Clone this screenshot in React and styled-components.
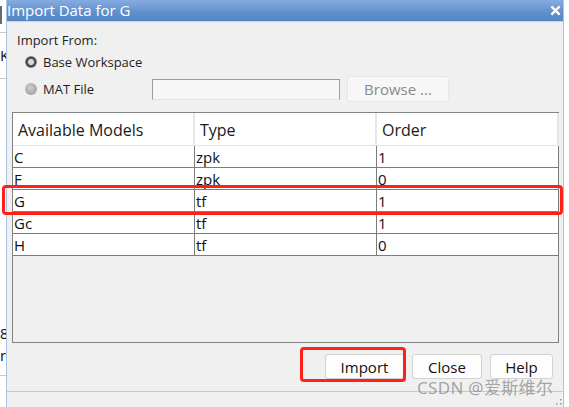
import React from "react";
import styled, { createGlobalStyle } from "styled-components";

const GlobalStyle = createGlobalStyle`
  html, body {
    margin: 0;
    padding: 0;
    background: #ffffff;
    overflow: hidden;
  }
  body {
    font-family: "Open Sans", "Noto Sans", sans-serif;
    color: #1a1a1a;
  }
`;

const models = [
  { name: "C", type: "zpk", order: "1" },
  { name: "F", type: "zpk", order: "0" },
  { name: "G", type: "tf", order: "1" },
  { name: "Gc", type: "tf", order: "1" },
  { name: "H", type: "tf", order: "0" },
];

export default function App() {
  return (
    <>
      <GlobalStyle />
      <Desktop>
        <BackStrip>
          <BackBar />
          <BackLine $top={8} />
          <BackGlyph $top={11}>K</BackGlyph>
          <BackLine $top={12} />
          <BackSpacer />
          <BackGlyph $top={0}>8</BackGlyph>
          <BackGlyph $top={0}>r</BackGlyph>
          <BackLine $top={9} />
        </BackStrip>

        <Window>
          <TitleBar>
            <Title>Import Data for G</Title>
            <CloseIcon viewBox="0 0 12 12">
              <path d="M1.5 1.5 L10.5 10.5 M10.5 1.5 L1.5 10.5" />
            </CloseIcon>
          </TitleBar>

          <Body>
            <SectionLabel>Import From:</SectionLabel>
            <RadioRow>
              <Radio $checked />
              <RadioLabel>Base Workspace</RadioLabel>
            </RadioRow>
            <RadioRow>
              <Radio />
              <RadioLabel>MAT File</RadioLabel>
              <FileField />
              <BrowseButton>Browse ...</BrowseButton>
            </RadioRow>

            <Table>
              <HeaderRow>
                <HeaderCell>Available Models</HeaderCell>
                <HeaderCell>Type</HeaderCell>
                <HeaderCell>Order</HeaderCell>
              </HeaderRow>
              {models.map((m) => (
                <Row key={m.name}>
                  <Cell>{m.name}</Cell>
                  <Cell>{m.type}</Cell>
                  <Cell>{m.order}</Cell>
                </Row>
              ))}
            </Table>

            <ButtonBar>
              <Button $w={79}>Import</Button>
              <Button $w={70}>Close</Button>
              <Button $w={63}>Help</Button>
            </ButtonBar>
          </Body>

          <StatusBar>
            <Grip viewBox="0 0 6 6">
              <rect x="4" y="0" width="1.5" height="1.5" />
              <rect x="0" y="4" width="1.5" height="1.5" />
              <rect x="4" y="4" width="1.5" height="1.5" />
            </Grip>
          </StatusBar>
        </Window>

        <RightStrip />

        <Highlight $x={2} $y={185} $w={561} $h={30} />
        <Highlight $x={300} $y={347} $w={106} $h={35} />
        <Watermark>CSDN @爱斯维尔</Watermark>
      </Desktop>
    </>
  );
}

const Desktop = styled.div`
  position: relative;
  display: flex;
  width: 569px;
  height: 407px;
  overflow: hidden;
`;

const BackStrip = styled.div`
  width: 6px;
  display: flex;
  flex-direction: column;
  background: #ffffff;
  overflow: hidden;
`;

const BackBar = styled.div`
  margin-top: 6px;
  width: 2px;
  height: 18px;
  background: #6a6a6a;
`;

const BackLine = styled.div`
  margin-top: ${(p) => p.$top}px;
  height: 1px;
  background: #c8c8c8;
`;

const BackGlyph = styled.div`
  margin-top: ${(p) => p.$top}px;
  font-size: 15px;
  line-height: 22px;
  color: #111;
`;

const BackSpacer = styled.div`
  flex: none;
  height: 243px;
`;

const Window = styled.div`
  width: 556px;
  display: flex;
  flex-direction: column;
  background: #f0f0f0;
  border-left: 1px solid #a9c3e3;
  border-right: 1px solid #a9c3e3;
`;

const TitleBar = styled.div`
  height: 21px;
  display: flex;
  align-items: center;
  justify-content: space-between;
  padding: 0 2px 0 0;
  background: linear-gradient(#86ace0, #5f8ecd 60%, #5586c6);
  border-bottom: 1px solid #c6d6ea;
`;

const Title = styled.span`
  font-size: 15px;
  line-height: 21px;
  color: #ffffff;
  white-space: nowrap;
`;

const CloseIcon = styled.svg`
  width: 11px;
  height: 11px;
  path {
    stroke: #ffffff;
    stroke-width: 2.4;
    fill: none;
  }
`;

const Body = styled.div`
  flex: 1;
  display: flex;
  flex-direction: column;
  padding-top: 10px;
`;

const SectionLabel = styled.div`
  margin-left: 10px;
  font-size: 13px;
  line-height: 16px;
  color: #1e1e1e;
`;

const RadioRow = styled.div`
  display: flex;
  align-items: center;
  height: 26px;
  margin-top: 1px;
  padding-left: 18px;
`;

const Radio = styled.span`
  width: 12px;
  height: 12px;
  border-radius: 50%;
  flex: none;
  background: ${(p) =>
    p.$checked
      ? "radial-gradient(circle, #d6d6d6 0 2.6px, #5c5c5c 3.4px, #3f3f3f 4.6px, #9a9a9a 6px)"
      : "radial-gradient(circle at 45% 40%, #cfcfcf, #a2a2a2 75%, #b8b8b8)"};
`;

const RadioLabel = styled.span`
  margin-left: 6px;
  width: 109px;
  font-size: 13px;
  line-height: 16px;
  color: #1e1e1e;
  white-space: nowrap;
`;

const FileField = styled.div`
  width: 186px;
  height: 19px;
  background: #f7f7f7;
  border: 1px solid #9c9c9c;
  border-bottom-color: #e2e2e2;
`;

const BrowseButton = styled.div`
  margin-left: 7px;
  width: 100px;
  height: 24px;
  display: flex;
  align-items: center;
  justify-content: center;
  font-size: 15px;
  color: #8a8a8a;
  background: #f7f7f7;
  border: 1px solid #e6e6e6;
  border-radius: 3px;
`;

const Table = styled.div`
  margin: 10px 4px 0 5px;
  height: 229px;
  border: 1px solid #838383;
  display: flex;
  flex-direction: column;
`;

const HeaderRow = styled.div`
  display: grid;
  grid-template-columns: 182px 182px 182px;
  height: 32px;
  background: #ffffff;
  border-bottom: 1px solid #e3e3e3;
`;

const HeaderCell = styled.div`
  padding-left: 5px;
  font-size: 16px;
  line-height: 34px;
  color: #1a1a1a;
  border-right: 2px solid #e6e6e6;
  white-space: nowrap;
`;

const Row = styled.div`
  display: grid;
  grid-template-columns: 182px 182px 182px;
  height: 22px;
  box-sizing: border-box;
  border-bottom: 1px solid #7c7c7c;
`;

const Cell = styled.div`
  padding-left: 1px;
  font-size: 15px;
  line-height: 22px;
  color: #111;
  background: #ffffff;
  border-right: 1px solid #7c7c7c;
  overflow: hidden;
  white-space: nowrap;
`;

const ButtonBar = styled.div`
  display: flex;
  justify-content: flex-end;
  gap: 8px;
  margin-top: 11px;
  padding-right: 10px;
`;

const Button = styled.div`
  width: ${(p) => p.$w}px;
  height: 25px;
  box-sizing: border-box;
  display: flex;
  align-items: center;
  justify-content: center;
  font-size: 15px;
  color: #111;
  background: #fdfdfd;
  border: 1px solid #d2d2d2;
  border-radius: 3px;
`;

const StatusBar = styled.div`
  height: 15px;
  display: flex;
  justify-content: flex-end;
  align-items: flex-end;
  border-top: 1px solid #b7cbe4;
  background: #f0f0f0;
`;

const Grip = styled.svg`
  width: 6px;
  height: 6px;
  margin: 0 1px 2px 0;
  rect {
    fill: #9a9a9a;
  }
`;

const RightStrip = styled.div`
  flex: 1;
  background: #ffffff;
`;

const Highlight = styled.div`
  position: absolute;
  left: ${(p) => p.$x}px;
  top: ${(p) => p.$y}px;
  width: ${(p) => p.$w}px;
  height: ${(p) => p.$h}px;
  box-sizing: border-box;
  border: 3px solid #ff2118;
  border-radius: 4px;
  pointer-events: none;
`;

const Watermark = styled.div`
  position: absolute;
  left: 417px;
  top: 377px;
  font-family: "Noto Sans", "Noto Sans CJK SC", sans-serif;
  font-size: 17px;
  line-height: 22px;
  letter-spacing: 0.3px;
  color: rgba(130, 130, 130, 0.7);
  white-space: nowrap;
  pointer-events: none;
`;
